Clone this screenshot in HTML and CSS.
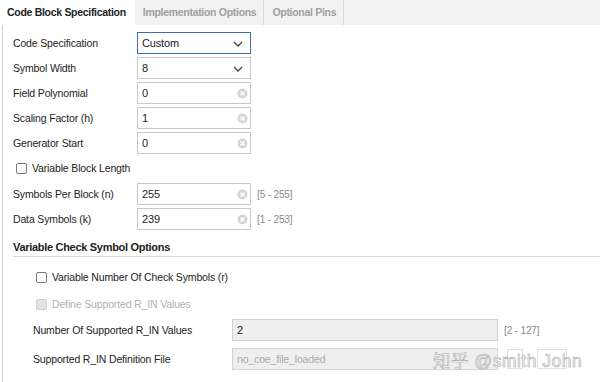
FILE: index.html
```html
<!DOCTYPE html>
<html lang="en">
<head>
    <meta charset="UTF-8">
    <title>Code Block Specification</title>
    <link rel="stylesheet" href="styles.css">
</head>
<body>
    <div class="tabs">
        <div class="tab active">Code Block Specification</div>
        <div class="tab">Implementation Options</div>
        <div class="tab">Optional Pins</div>
    </div>

    <div class="panel">
        <div class="row">
            <label class="label">Code Specification</label>
            <div class="field select focused">Custom
                <svg class="chev" width="10" height="6" viewBox="0 0 10 6"><path d="M1 1 L5 5 L9 1" fill="none" stroke="#444" stroke-width="1.3"/></svg>
            </div>
        </div>
        <div class="row">
            <label class="label">Symbol Width</label>
            <div class="field select">8
                <svg class="chev" width="10" height="6" viewBox="0 0 10 6"><path d="M1 1 L5 5 L9 1" fill="none" stroke="#444" stroke-width="1.3"/></svg>
            </div>
        </div>
        <div class="row">
            <label class="label">Field Polynomial</label>
            <div class="field">0
                <svg class="clear" width="11" height="11" viewBox="0 0 11 11"><circle cx="5.5" cy="5.5" r="5" fill="#d4d4d4"/><path d="M3.5 3.5 L7.5 7.5 M7.5 3.5 L3.5 7.5" stroke="#fff" stroke-width="1.4"/></svg>
            </div>
        </div>
        <div class="row">
            <label class="label">Scaling Factor (h)</label>
            <div class="field">1
                <svg class="clear" width="11" height="11" viewBox="0 0 11 11"><circle cx="5.5" cy="5.5" r="5" fill="#d4d4d4"/><path d="M3.5 3.5 L7.5 7.5 M7.5 3.5 L3.5 7.5" stroke="#fff" stroke-width="1.4"/></svg>
            </div>
        </div>
        <div class="row">
            <label class="label">Generator Start</label>
            <div class="field">0
                <svg class="clear" width="11" height="11" viewBox="0 0 11 11"><circle cx="5.5" cy="5.5" r="5" fill="#d4d4d4"/><path d="M3.5 3.5 L7.5 7.5 M7.5 3.5 L3.5 7.5" stroke="#fff" stroke-width="1.4"/></svg>
            </div>
        </div>
        <div class="check-row">
            <span class="box"></span>Variable Block Length
        </div>
        <div class="row">
            <label class="label">Symbols Per Block (n)</label>
            <div class="field">255
                <svg class="clear" width="11" height="11" viewBox="0 0 11 11"><circle cx="5.5" cy="5.5" r="5" fill="#d4d4d4"/><path d="M3.5 3.5 L7.5 7.5 M7.5 3.5 L3.5 7.5" stroke="#fff" stroke-width="1.4"/></svg>
            </div>
            <span class="range">[5 - 255]</span>
        </div>
        <div class="row">
            <label class="label">Data Symbols (k)</label>
            <div class="field">239
                <svg class="clear" width="11" height="11" viewBox="0 0 11 11"><circle cx="5.5" cy="5.5" r="5" fill="#d4d4d4"/><path d="M3.5 3.5 L7.5 7.5 M7.5 3.5 L3.5 7.5" stroke="#fff" stroke-width="1.4"/></svg>
            </div>
            <span class="range">[1 - 253]</span>
        </div>

        <div class="section-title">Variable Check Symbol Options</div>

        <div class="section">
            <div class="check-row">
                <span class="box"></span>Variable Number Of Check Symbols (r)
            </div>
            <div class="check-row disabled">
                <span class="box"></span>Define Supported R_IN Values
            </div>
            <div class="row spaced">
                <label class="label wide">Number Of Supported R_IN Values</label>
                <div class="field long readonly">2</div>
                <span class="range">[2 - 127]</span>
            </div>
            <div class="row">
                <label class="label wide">Supported R_IN Definition File</label>
                <div class="field long readonly placeholder">no_coe_file_loaded</div>
                <span class="btn"></span>
                <span class="btn wide-btn"></span>
            </div>
        </div>
    </div>

    <div class="watermark">知乎 @smith John</div>
</body>
</html>
```

FILE: styles.css
```css
body {
    margin: 0;
    width: 600px;
    height: 382px;
    overflow: hidden;
    background: #fff;
    font-family: "Liberation Sans", Arial, "Noto Sans CJK SC", sans-serif;
    font-size: 10.5px;
    letter-spacing: -0.15px;
    color: #222;
    position: relative;
}
.tabs {
    display: flex;
    height: 25px;
    background: #f2f2f2;
    margin-left: 2px;
}
.tab {
    padding: 0 7px 0 8px;
    line-height: 25px;
    font-weight: bold;
    letter-spacing: -0.3px;
    color: #a0a0a0;
    border-right: 1px solid #d8d8d8;
}
.tab.active {
    background: #fff;
    color: #222;
    border-right: none;
    padding: 0 9px 0 5px;
}
.panel {
    margin-left: 2px;
    border-left: 1px solid #d0d0d0;
    padding: 7px 0 0 10px;
    height: 350px;
}
.row {
    display: flex;
    align-items: center;
    height: 22px;
    margin-bottom: 3px;
}
.row.spaced {
    margin-bottom: 7px;
}
.label {
    width: 124px;
    flex-shrink: 0;
}
.label.wide {
    width: 199px;
}
.field {
    position: relative;
    box-sizing: border-box;
    width: 114px;
    height: 22px;
    border: 1px solid #c8c8c8;
    padding-left: 4px;
    line-height: 20px;
    font-size: 11px;
    background: #fff;
}
.field.focused {
    border-color: #3f6cb0;
}
.field.long {
    width: 266px;
}
.field.readonly {
    background: #efefef;
    border-color: #d4d4d4;
}
.field.placeholder {
    color: #aaa;
    font-size: 10.5px;
}
.chev {
    position: absolute;
    right: 7px;
    top: 8px;
}
.clear {
    position: absolute;
    right: 2px;
    top: 5px;
}
.range {
    margin-left: 6px;
    color: #8a8a8a;
    font-size: 10px;
}
.check-row {
    display: flex;
    align-items: center;
    height: 22px;
    margin: 2px 0 4px 3px;
}
.box {
    box-sizing: border-box;
    width: 11px;
    height: 11px;
    border: 1px solid #7a7a7a;
    border-radius: 2px;
    margin-right: 5px;
    background: #fff;
}
.check-row.disabled {
    color: #b0b0b0;
}
.check-row.disabled .box {
    border-color: #cfcfcf;
    background: #e2e2e2;
}
.section-title {
    font-weight: bold;
    font-size: 11px;
    letter-spacing: -0.3px;
    padding: 8px 0 3px 0;
    border-bottom: 1px solid #d8d8d8;
}
.section {
    padding: 8px 0 0 20px;
}
.section .check-row {
    margin: 1px 0 5px 3px;
}
.section .check-row.disabled {
    margin-bottom: 4px;
}
.btn {
    width: 14px;
    height: 18px;
    border: 1px solid #e0e0e0;
    margin-left: 9px;
}
.btn.wide-btn {
    width: 28px;
    margin-left: 14px;
}
.watermark {
    position: absolute;
    left: 433px;
    top: 347px;
    font-size: 17.5px;
    color: #fff;
    letter-spacing: 0.5px;
    -webkit-text-stroke: 0.6px #a9a9a9;
}
```
